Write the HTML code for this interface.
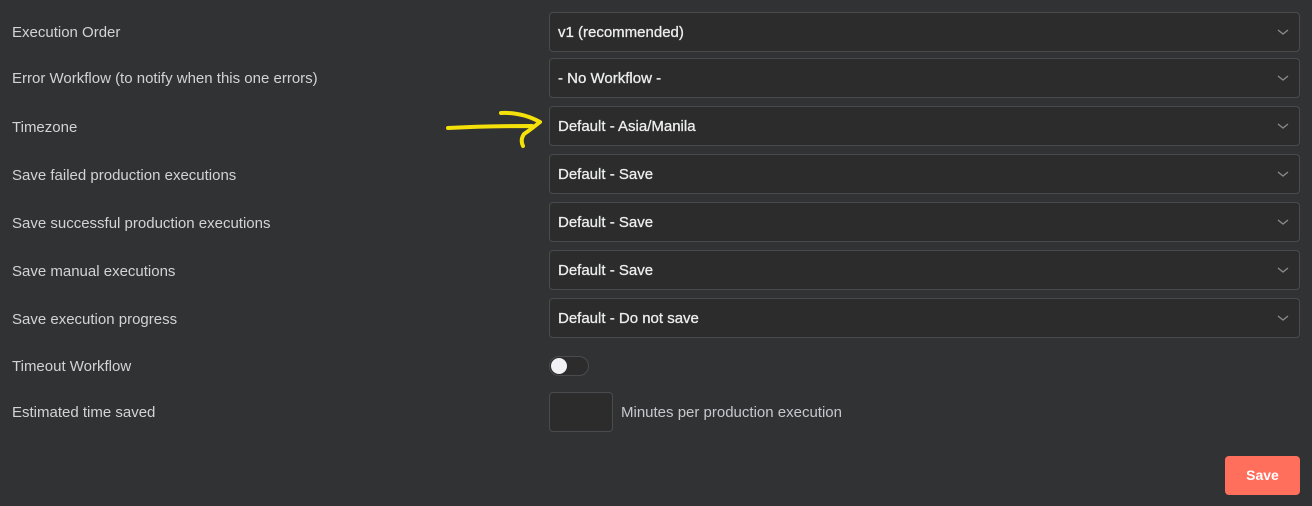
<!DOCTYPE html>
<html><head><style>
body{margin:0;width:1312px;height:506px;background:#313234;font-family:"Liberation Sans",sans-serif;position:relative;overflow:hidden}
.l{position:absolute;left:12px;color:#d2d3d6;font-size:15px}
.s{position:absolute;left:549px;width:749px;height:38px;border:1px solid #4a4b4e;border-radius:4px;background:#2b2c2b;box-sizing:content-box}
.s span{position:absolute;left:8px;top:11px;color:#eceded;font-size:15px;-webkit-text-stroke:0.3px #eceded}
.s svg{position:absolute;right:10px;top:15px}
</style></head><body>
<div class="l" style="top:24px">Execution Order</div>
<div class="l" style="top:70px">Error Workflow (to notify when this one errors)</div>
<div class="l" style="top:119px">Timezone</div>
<div class="l" style="top:167px">Save failed production executions</div>
<div class="l" style="top:215px">Save successful production executions</div>
<div class="l" style="top:263px">Save manual executions</div>
<div class="l" style="top:311px">Save execution progress</div>
<div class="l" style="top:358px">Timeout Workflow</div>
<div class="l" style="top:404px">Estimated time saved</div>

<div class="s" style="top:12px"><span>v1 (recommended)</span><svg width="12" height="8"><path d="M1 2l5 4 5-4" stroke="#8a8b8f" fill="none" stroke-width="1.3"/></svg></div>
<div class="s" style="top:58px"><span>- No Workflow -</span><svg width="12" height="8"><path d="M1 2l5 4 5-4" stroke="#8a8b8f" fill="none" stroke-width="1.3"/></svg></div>
<div class="s" style="top:106px"><span>Default - Asia/Manila</span><svg width="12" height="8"><path d="M1 2l5 4 5-4" stroke="#8a8b8f" fill="none" stroke-width="1.3"/></svg></div>
<div class="s" style="top:154px"><span>Default - Save</span><svg width="12" height="8"><path d="M1 2l5 4 5-4" stroke="#8a8b8f" fill="none" stroke-width="1.3"/></svg></div>
<div class="s" style="top:202px"><span>Default - Save</span><svg width="12" height="8"><path d="M1 2l5 4 5-4" stroke="#8a8b8f" fill="none" stroke-width="1.3"/></svg></div>
<div class="s" style="top:250px"><span>Default - Save</span><svg width="12" height="8"><path d="M1 2l5 4 5-4" stroke="#8a8b8f" fill="none" stroke-width="1.3"/></svg></div>
<div class="s" style="top:298px"><span>Default - Do not save</span><svg width="12" height="8"><path d="M1 2l5 4 5-4" stroke="#8a8b8f" fill="none" stroke-width="1.3"/></svg></div>

<svg style="position:absolute;left:444px;top:106px" width="104" height="46"><path d="M4 22 Q40 20 88 20 M57 7 Q78 6 96 16 Q86 24 80 28 Q76 34 79 40" stroke="#f5e10a" stroke-width="4" fill="none" stroke-linecap="round" stroke-linejoin="round"/></svg>

<div style="position:absolute;left:549px;top:356px;width:38px;height:18px;border:1px solid #4a4b4e;border-radius:10px;background:#2b2c2b"></div>
<div style="position:absolute;left:551px;top:358px;width:16px;height:16px;border-radius:50%;background:#f1f1f6"></div>

<div style="position:absolute;left:549px;top:392px;width:62px;height:38px;border:1px solid #4a4b4e;border-radius:4px;background:#2b2c2b"></div>
<div style="position:absolute;left:621px;top:404px;color:#c7c8cd;font-size:15px">Minutes per production execution</div>

<div style="position:absolute;left:1225px;top:456px;width:75px;height:39px;border-radius:4px;background:#ff6f5c;color:#fff;font-size:14px;font-weight:bold;text-align:center;line-height:39px">Save</div>
</body></html>
